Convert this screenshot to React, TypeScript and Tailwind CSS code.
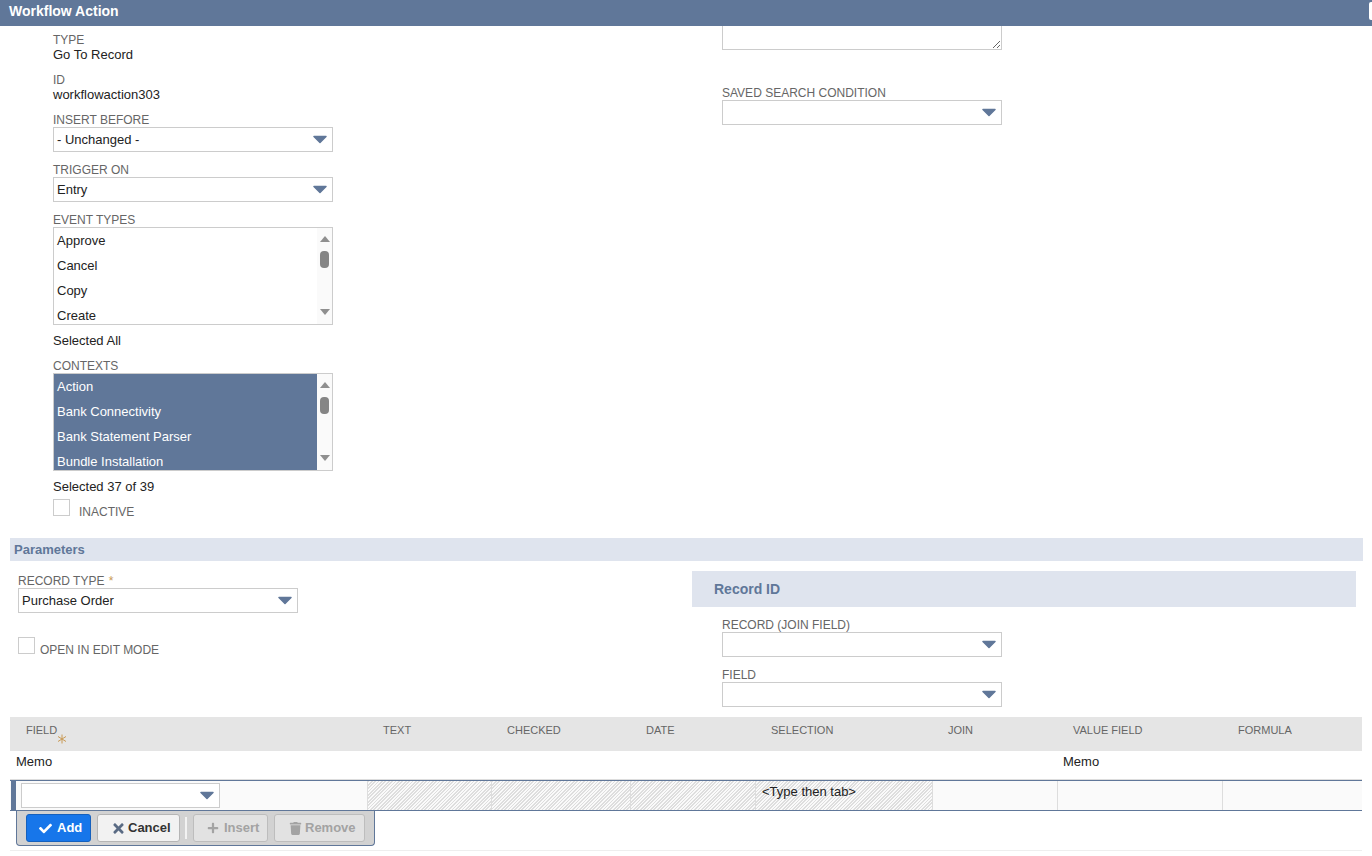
import React from "react";
import { FaCheck, FaPlus, FaTimes, FaTrash } from "react-icons/fa";

const Label: React.FC<{ children: React.ReactNode; className?: string }> = ({ children, className = "" }) => (
	<div className={`text-[12px] leading-[14px] uppercase text-[#666] ${className}`}>{children}</div>
);

const Arrow = () => (
	<svg width="14" height="9" viewBox="0 0 14 9" className="shrink-0">
		<path d="M1 1.5h12L7 7.5z" fill="#607799" stroke="#607799" strokeWidth="1.5" strokeLinejoin="round" />
	</svg>
);

const Select: React.FC<{ value?: string; className?: string }> = ({ value, className = "w-[280px]" }) => (
	<div className={`h-[25px] border border-[#ccc] bg-white flex items-center justify-between pl-[3px] pr-[5px] text-[13px] text-[#222] ${className}`}>
		<span>{value}</span>
		<Arrow />
	</div>
);

const ListBox: React.FC<{ items: string[]; selected?: boolean }> = ({ items, selected }) => (
	<div className="w-[280px] h-[98px] border border-[#ccc] flex overflow-hidden">
		<div className={`flex-1 ${selected ? "bg-[#607799] text-white" : "bg-white text-[#222]"}`}>
			{items.map((item) => (
				<div key={item} className="h-[25px] leading-[25px] pl-[3px] text-[13px]">
					{item}
				</div>
			))}
		</div>
		<div className="w-[15px] bg-[#fafafa] flex flex-col items-center pt-[8px]">
			<div className="w-0 h-0 border-x-[5px] border-x-transparent border-b-[6px] border-b-[#8f8f8f]" />
			<div className="w-[9px] h-[17px] rounded-[4px] bg-[#858585] mt-[9px]" />
			<div className="w-0 h-0 border-x-[5px] border-x-transparent border-t-[6px] border-t-[#8f8f8f] mt-[41px]" />
		</div>
	</div>
);

const Checkbox = () => <div className="w-[17px] h-[17px] border border-[#ccc] bg-white shrink-0" />;

const Star = () => (
	<svg width="10" height="10" viewBox="0 0 10 10" className="shrink-0 mt-[11px]" stroke="#c99a55" strokeWidth="1">
		<path d="M5 0.5v9M1 2.5l8 5M9 2.5l-8 5" />
	</svg>
);

const columns = [
	{ name: "Field", width: "w-[357px]" },
	{ name: "Text", width: "w-[124px]" },
	{ name: "Checked", width: "w-[139px]" },
	{ name: "Date", width: "w-[125px]" },
	{ name: "Selection", width: "w-[177px]" },
	{ name: "Join", width: "w-[125px]" },
	{ name: "Value Field", width: "w-[165px]" },
	{ name: "Formula", width: "w-[140px]" },
];

const hatch =
	"border-l border-[#ddd] bg-[repeating-linear-gradient(135deg,#dedede_0,#dedede_1.2px,#fafafa_1.2px,#fafafa_2.4px)]";

const ToolButton: React.FC<{
	icon: React.ReactNode;
	label: string;
	className: string;
}> = ({ icon, label, className }) => (
	<button className={`h-[28px] rounded-[3px] border flex items-center text-[13px] font-bold ${className}`}>
		{icon}
		{label}
	</button>
);

export default function App() {
	return (
		<div className="h-[856px] overflow-hidden bg-white font-['Liberation_Sans',Arial,sans-serif]">
			<header className="h-[26px] bg-[#607799] flex items-start justify-between pl-[9px] pt-[2px]">
				<span className="text-[14px] leading-[18px] font-bold text-white">Workflow Action</span>
				<div className="w-[3px] h-[18px] bg-white rounded-l-[2px]" />
			</header>

			<section className="flex">
				<div className="w-[722px] pl-[53px] pt-[7px] text-[13px] text-[#222]">
					<Label>Type</Label>
					<div className="leading-[14px] pt-px">Go To Record</div>
					<Label className="mt-[11px]">ID</Label>
					<div className="leading-[14px] pt-px">workflowaction303</div>
					<Label className="mt-[11px]">Insert Before</Label>
					<Select value="- Unchanged -" />
					<Label className="mt-[11px]">Trigger On</Label>
					<Select value="Entry" />
					<Label className="mt-[11px]">Event Types</Label>
					<ListBox items={["Approve", "Cancel", "Copy", "Create"]} />
					<div className="leading-[14px] mt-[9px]">Selected All</div>
					<Label className="mt-[11px]">Contexts</Label>
					<ListBox selected items={["Action", "Bank Connectivity", "Bank Statement Parser", "Bundle Installation"]} />
					<div className="leading-[14px] mt-[9px]">Selected 37 of 39</div>
					<div className="flex gap-[9px] mt-[5px]">
						<Checkbox />
						<Label className="mt-[6px]">Inactive</Label>
					</div>
				</div>
				<div>
					<textarea
						readOnly
						className="block w-[280px] h-[24px] border-x border-b border-[#ccc] outline-none"
					/>
					<Label className="mt-[36px]">Saved Search Condition</Label>
					<Select />
				</div>
			</section>

			<div className="ml-[10px] w-[1353px] h-[23px] mt-[19px] bg-[#dfe4ee] pl-[4px] text-[13px] leading-[23px] font-bold text-[#607799]">
				Parameters
			</div>

			<section className="flex">
				<div className="w-[692px] pl-[18px] pt-[13px]">
					<Label>
						Record Type <span className="text-[#c99a55] ml-[1px]">*</span>
					</Label>
					<Select value="Purchase Order" />
					<div className="flex gap-[5px] mt-[24px]">
						<Checkbox />
						<Label className="mt-[6px]">Open In Edit Mode</Label>
					</div>
				</div>
				<div className="w-[664px] pt-[10px]">
					<div className="h-[36px] bg-[#dfe4ee] pl-[22px] text-[14px] leading-[36px] font-bold text-[#607799]">
						Record ID
					</div>
					<div className="pl-[30px] pt-[10px]">
						<Label className="pt-px">Record (Join Field)</Label>
						<Select />
						<Label className="mt-[11px]">Field</Label>
						<Select />
					</div>
				</div>
			</section>

			<section className="ml-[10px] w-[1352px] mt-[10px] h-[134px] border-b border-[#eee]">
				<div className="flex h-[34px] bg-[#e5e5e5]">
					{columns.map((col) => (
						<div key={col.name} className={`${col.width} pl-[16px] pt-[6px] flex items-start`}>
							<span className="text-[11px] leading-[14px] uppercase text-[#666]">{col.name}</span>
							{col.name === "Field" && <Star />}
						</div>
					))}
				</div>

				<div className="flex h-[29px] border-b border-[#ddd] text-[13px] leading-[22px] text-[#222]">
					<div className="w-[1053px] pl-[6px]">Memo</div>
					<div>Memo</div>
				</div>

				<div className="flex h-[31px] border-y border-[#607799] bg-[#fafafa] text-[13px] text-[#222]">
					<div className="w-[5px] ml-px -my-px bg-[#607799] shrink-0" />
					<div className="w-[351px] pl-[5px] pt-[2px]">
						<Select className="w-[199px]" />
					</div>
					<div className={`w-[124px] ${hatch}`} />
					<div className={`w-[139px] ${hatch}`} />
					<div className={`w-[125px] ${hatch}`} />
					<div className={`w-[177px] pl-[6px] leading-[22px] ${hatch}`}>&lt;Type then tab&gt;</div>
					<div className="w-[125px] border-l border-[#ddd]" />
					<div className="w-[165px] border-l border-[#ddd]" />
					<div className="w-[140px] border-l border-[#ddd]" />
				</div>

				<div className="ml-[6px] w-[359px] h-[35px] bg-[#d2d2d2] border-x border-b border-[#607799] rounded-b-[4px] flex pl-[9px] pt-[3px]">
					<ToolButton
						icon={<FaCheck className="text-[13px] mr-[5px]" />}
						label="Add"
						className="w-[65px] pl-[12px] bg-[#1776ea] border-[#1560bd] text-white"
					/>
					<ToolButton
						icon={<FaTimes className="text-[15px] mr-[2px] text-[#5a6b84]" />}
						label="Cancel"
						className="w-[83px] ml-[6px] pl-[13px] bg-[#f2f2f2] border-[#b5b5b5] text-[#333]"
					/>
					<div className="w-[2px] h-[22px] bg-[#f2f2f2] ml-[5px] mt-[3px]" />
					<ToolButton
						icon={<FaPlus className="text-[12px] mr-[5px]" />}
						label="Insert"
						className="w-[75px] ml-[6px] pl-[13px] bg-[#e2e2e2] border-[#bdbdbd] text-[#a3a3a3]"
					/>
					<ToolButton
						icon={<FaTrash className="text-[13px] mr-[3px]" />}
						label="Remove"
						className="w-[91px] ml-[6px] pl-[14px] bg-[#e2e2e2] border-[#bdbdbd] text-[#a3a3a3]"
					/>
				</div>
			</section>
		</div>
	);
}
